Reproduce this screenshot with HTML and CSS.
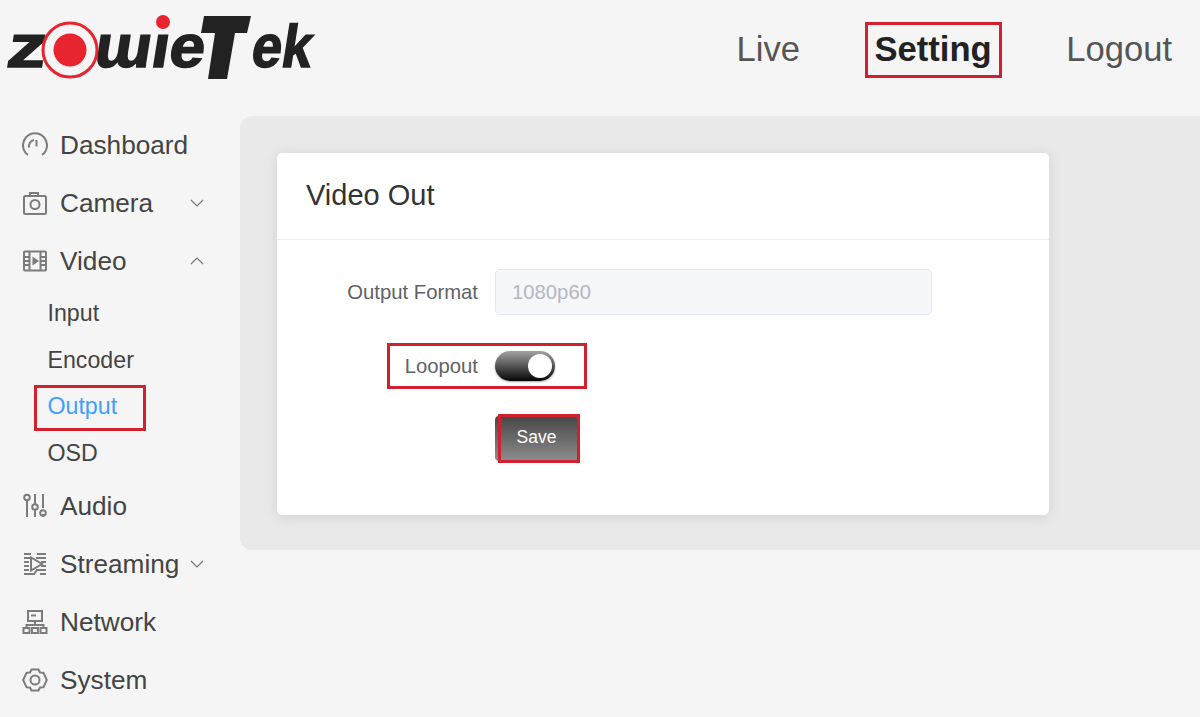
FILE: index.html
```html
<!DOCTYPE html>
<html lang="en">
<head>
<meta charset="utf-8">
<title>ZowieTek Video Out</title>
<link rel="stylesheet" href="styles.css">
</head>
<body>
<div class="page">
  <header class="top">
    <svg class="logo" width="330" height="100" viewBox="0 0 330 100" role="img" aria-label="ZowieTek">
      <g class="logo-text">
        <text x="0" y="67" font-size="60" textLength="39" lengthAdjust="spacingAndGlyphs" transform="translate(4.500 0) skewX(-9) translate(11 0)">z</text>
        <text x="0" y="67" font-size="60" textLength="110" lengthAdjust="spacingAndGlyphs" transform="translate(92 0) skewX(-9) translate(11 0)">ɯıe</text>
        <text x="0" y="67" font-size="60" textLength="60" lengthAdjust="spacingAndGlyphs" transform="translate(249 0) skewX(-9) translate(11 0)">ek</text>
      </g>
      <path class="logo-t" d="M204 16H251L247 33H235L227 79H208L215 33H201Z"/>
      <circle cx="70" cy="50" r="27" fill="#f5f5f5" stroke="#e8252e" stroke-width="3"/>
      <circle cx="70" cy="50" r="16.500" fill="#e8252e"/>
      <circle cx="163" cy="22" r="7" fill="#e8252e"/>
    </svg>
    <nav class="topnav">
      <a class="tab">Live</a>
      <a class="tab tab-active">Setting</a>
      <a class="tab">Logout</a>
    </nav>
  </header>
  <div class="body">
    <aside class="side">
      <div class="item">
        <svg class="ico" viewBox="0 0 26 26"><path d="M6 23A12 12 0 1 1 20 23"/><path d="M7 15.500A6.500 6.500 0 0 1 12 8"/><path d="M14.500 8V14.500"/></svg>
        <span>Dashboard</span>
      </div>
      <div class="item">
        <svg class="ico" viewBox="0 0 26 26"><rect x="2" y="6" width="22" height="18" rx="1.500"/><path d="M8 6V3H16V6"/><circle cx="13" cy="14.500" r="4.500"/></svg>
        <span>Camera</span>
        <svg class="chev" viewBox="0 0 14 8"><path d="M1 1L7 7L13 1"/></svg>
      </div>
      <div class="item">
        <svg class="ico" viewBox="0 0 26 26"><rect x="2" y="3.500" width="22" height="19" rx="1"/><path d="M7.500 3.500V22.500M18.500 3.500V22.500M2 9H7.500M2 13H7.500M2 17H7.500M18.500 9H24M18.500 13H24M18.500 17H24"/><path class="solid" d="M10.500 8.500L17 13L10.500 17.500Z"/></svg>
        <span>Video</span>
        <svg class="chev" viewBox="0 0 14 8"><path d="M1 7L7 1L13 7"/></svg>
      </div>
      <a class="sub">Input</a>
      <a class="sub">Encoder</a>
      <a class="sub sub-active">Output</a>
      <a class="sub">OSD</a>
      <div class="item">
        <svg class="ico" viewBox="0 0 26 26"><path d="M5 7V24M13 1V11M13 17V24M21 1V15M21 21V24"/><circle cx="5" cy="4.500" r="2.800"/><circle cx="13" cy="14" r="2.800"/><circle cx="21" cy="20" r="2.800"/></svg>
        <span>Audio</span>
      </div>
      <div class="item">
        <svg class="ico" viewBox="0 0 26 26"><path d="M2 3H9M15 3H24M2 7H9M14 7H24M2 11H7M19 11H24M2 15H7M19 15H24M2 19H7M14 19H24M2 23H12L15 19M18 23H24"/><path d="M9 6.500V19.500L20 13Z"/></svg>
        <span>Streaming</span>
        <svg class="chev" viewBox="0 0 14 8"><path d="M1 1L7 7L13 1"/></svg>
      </div>
      <div class="item">
        <svg class="ico" viewBox="0 0 26 26"><rect x="6" y="2" width="14" height="10"/><path d="M9 6.500H14M13 12V16M4.500 19V16H21.500V19"/><rect x="1.500" y="19" width="6" height="5"/><rect x="10" y="19" width="6" height="5"/><rect x="18.500" y="19" width="6" height="5"/></svg>
        <span>Network</span>
      </div>
      <div class="item">
        <svg class="ico" viewBox="0 0 26 26"><path d="M9.500 2.500H16.500L18 5.500L21.500 5.800L24.800 13L21.500 20.200L18 20.500L16.500 23.500H9.500L8 20.500L4.500 20.200L1.200 13L4.500 5.800L8 5.500Z" stroke-linejoin="round"/><circle cx="13" cy="13" r="4.500"/></svg>
        <span>System</span>
      </div>
    </aside>
    <main class="panel">
      <section class="card">
        <h1 class="card-title">Video Out</h1>
        <form class="form">
          <div class="row">
            <label class="label">Output Format</label>
            <div class="input">1080p60</div>
          </div>
          <div class="row row-switch">
            <label class="label">Loopout</label>
            <span class="switch"><span class="knob"></span></span>
          </div>
          <div class="row row-save">
            <span class="label"></span>
            <button type="button" class="save">Save</button>
          </div>
        </form>
      </section>
    </main>
  </div>
  <i class="mark mark-setting"></i>
  <i class="mark mark-output"></i>
  <i class="mark mark-loopout"></i>
  <i class="mark mark-save"></i>
</div>
</body>
</html>
```
FILE: styles.css
```css
* { box-sizing: border-box; }
html, body { margin: 0; height: 100%; overflow: hidden; }
body { background: #f5f5f5; color: #333; font-family: "Liberation Sans", Arial, sans-serif; }
.page { position: relative; width: 1200px; height: 717px; overflow: hidden; }

.top { height: 116px; display: flex; justify-content: space-between; align-items: flex-start; }
.logo { display: block; flex: none; }
.logo-text text { font-family: "Liberation Sans", Arial, sans-serif; font-weight: 700; fill: #222; stroke: #222; stroke-width: 1.500px; }
.logo-t { fill: #222; }
.topnav { display: flex; gap: 74.500px; padding: 29px 28px 0 0; font-size: 34.600px; line-height: 40px; }
.tab { color: #555; }
.tab-active { color: #222; font-weight: 700; }

.body { display: flex; align-items: flex-start; }
.side { width: 240px; flex: none; font-size: 26.200px; color: #444; }
.item { height: 58px; display: flex; align-items: center; padding-left: 22px; position: relative; }
.ico { width: 26px; height: 26px; margin-right: 12px; flex: none; fill: none; stroke: #7c7c7c; stroke-width: 2; }
.ico .solid { fill: #7c7c7c; stroke: none; }
.chev { width: 14px; height: 8px; margin-left: auto; margin-right: 36px; fill: none; stroke: #777; stroke-width: 1.200; flex: none; }
.sub { display: flex; align-items: center; height: 46.800px; padding-left: 47.500px; font-size: 23.200px; color: #444; }
.sub-active { color: #409eff; }

.panel { flex: 1; height: 434px; padding: 37px 151px 0 37px; background: #e9e9e9; border-radius: 12px 0 0 12px; }
.card { height: 362px; background: #fff; border-radius: 5px; box-shadow: 0 2px 14px rgba(0, 0, 0, .1); }
.card-title { margin: 0; height: 87px; padding: 0 29px 2px; display: flex; align-items: center; font-size: 29px; font-weight: 400; color: #333; border-bottom: 1px solid #ebeef5; }
.form { padding-top: 29px; font-size: 20.300px; }
.row { display: flex; align-items: center; }
.label { width: 218px; padding-right: 17px; text-align: right; color: #606266; flex: none; }
.input { width: 437px; height: 46px; padding: 0 16px; display: flex; align-items: center; background: #f5f7fa; border: 1px solid #e4e7ed; border-radius: 5px; color: #b4b7be; }
.row-switch { margin-top: 28px; height: 46px; }
.switch { position: relative; width: 60px; height: 30px; border-radius: 15px; background: linear-gradient(#a3a3a3, #050505); box-shadow: 0 1px 2px rgba(0, 0, 0, .35); }
.knob { position: absolute; top: 3px; right: 3px; width: 24px; height: 24px; border-radius: 50%; background: #fff; }
.row-save { margin-top: 27px; }
.save { width: 83px; height: 45px; padding: 0 0 2px; border: 0; border-radius: 4px; background: linear-gradient(#474747, #8c8c8c); color: #fff; font: 17.500px "Liberation Sans", Arial, sans-serif; }

.mark { position: absolute; border: 3px solid #d3202e; pointer-events: none; }
.mark-setting { left: 865px; top: 22px; width: 137px; height: 56px; }
.mark-output { left: 34px; top: 385px; width: 112px; height: 46px; }
.mark-loopout { left: 387px; top: 343px; width: 200px; height: 46px; }
.mark-save { left: 498px; top: 414px; width: 82px; height: 49px; }
```
